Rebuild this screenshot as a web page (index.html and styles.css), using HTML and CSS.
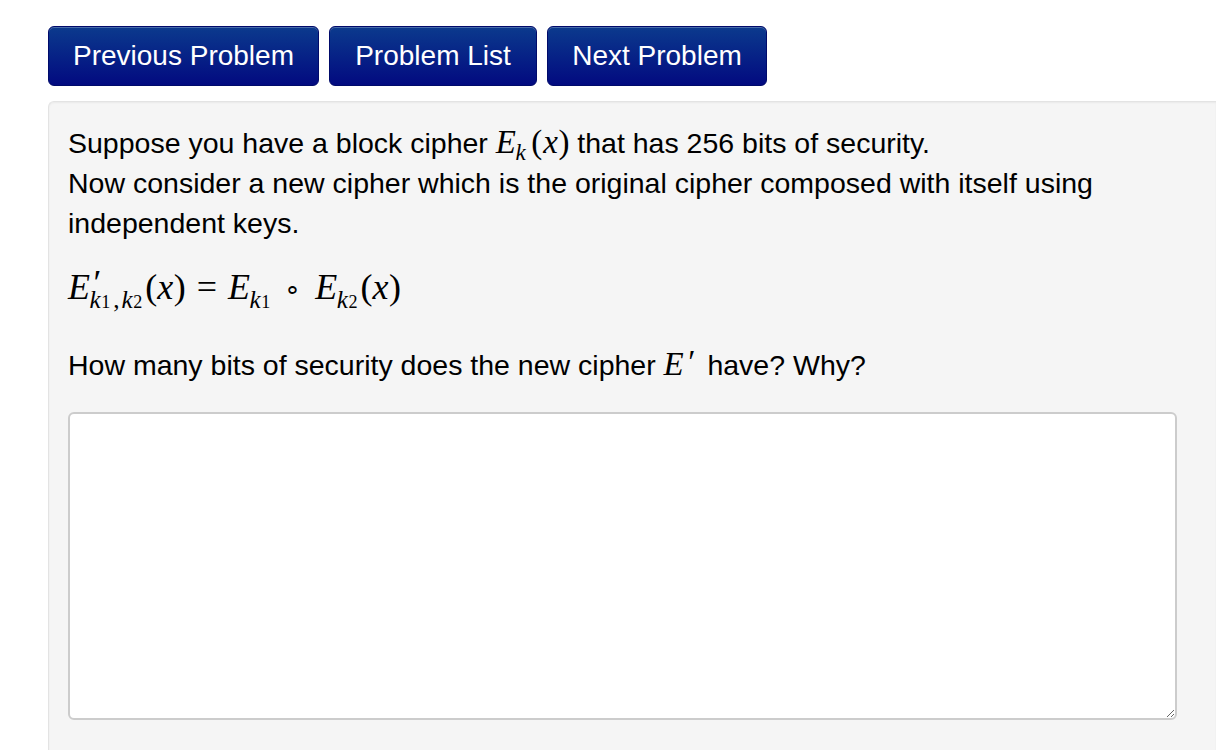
FILE: index.html
```html
<!DOCTYPE html>
<html>
<head>
<meta charset="utf-8">
<link rel="stylesheet" href="styles.css">
</head>
<body>
<div class="page">
  <div class="nav">
    <button class="btn">Previous Problem</button>
    <button class="btn">Problem List</button>
    <button class="btn">Next Problem</button>
  </div>
  <div class="well">
    <p class="para">Suppose you have a block cipher <span class="m"><i>E</i><sub class="s1"><i>k</i></sub><span class="pl">(</span><i>x</i>)</span> that has 256 bits of security.<br>Now consider a new cipher which is the original cipher composed with itself using independent keys.</p>
    <p class="eq"><span class="m big"><i>E</i><span class="prime">′</span><sub class="s2"><i>k</i><span class="n">1</span><span class="cm">,</span><i>k</i><span class="n">2</span></sub><span class="pl">(</span><i>x</i>)<span class="op">=</span><i>E</i><sub class="s3"><i>k</i><span class="n">1</span></sub><span class="op circ">∘</span><i>E</i><sub class="s3"><i>k</i><span class="n">2</span></sub><span class="pl">(</span><i>x</i>)</span></p>
    <p class="para">How many bits of security does the new cipher <span class="m"><i>E</i><span class="prime p2">′</span></span> have? Why?</p>
    <textarea class="answer"></textarea>
  </div>
</div>
</body>
</html>
```
FILE: styles.css
```css
html, body { margin: 0; padding: 0; background: #fff; }
body { font-family: "Liberation Sans", Arial, sans-serif; color: #000; }
.page { padding: 26px 0 0 48px; }
.nav { display: flex; gap: 10px; }
.btn {
  font-family: "Liberation Sans", Arial, sans-serif;
  font-size: 28px;
  color: #fff;
  height: 60px;
  padding: 0;
  border: 1px solid #000a6a;
  border-radius: 6px;
  background: linear-gradient(#0b3a8d, #020a80);
  box-shadow: inset 0 1px 0 rgba(255,255,255,0.25);
}
.btn:nth-child(1) { width: 271px; }
.btn:nth-child(2) { width: 208px; }
.btn:nth-child(3) { width: 220px; }
.well {
  margin-top: 15px;
  background: #f5f5f5;
  border: 1px solid #e3e3e3;
  border-right: none;
  border-radius: 6px 0 0 0;
  box-shadow: inset 0 1px 2px rgba(0,0,0,0.05);
  padding: 21px 0 40px 19px;
  min-height: 700px;
}
.para { margin: 0; font-size: 28.5px; line-height: 40px; width: 1130px; }
.m { font-family: "Liberation Serif", "Times New Roman", serif; font-size: 33px; white-space: nowrap; line-height: 1; }
.m i { font-style: italic; letter-spacing: 0.5px; }
.m sub { font-size: 0.7em; vertical-align: -0.3em; line-height: 0; margin-left: -1px; }
.m .n { font-style: normal; font-size: 0.72em; }
.pl { margin-left: 3px; }
.prime { font-style: normal; display: inline-block; width: 0; position: relative; top: -4px; left: 3px; }
.p2 { width: auto; margin-left: 2px; margin-right: 6px; top: -2px; left: 2px; }
.s2 { margin-left: 0; }
.s1 { margin-right: 2px; }
.s1 + .pl { margin-right: 1px; }
.cm { margin: 0 2px 0 3px; }
.eq { margin: 23px 0 23px; line-height: 56px; }
.big { font-size: 36px; }
.big sub { vertical-align: -0.35em; }
.op { margin: 0 11px; }
.circ { font-size: 0.75em; margin: 0 14px; }
.answer {
  display: block;
  margin-top: 27px;
  width: 1109px;
  height: 308px;
  box-sizing: border-box;
  border: 2px solid #ccc;
  border-radius: 6px;
  background: #fff;
}
```
